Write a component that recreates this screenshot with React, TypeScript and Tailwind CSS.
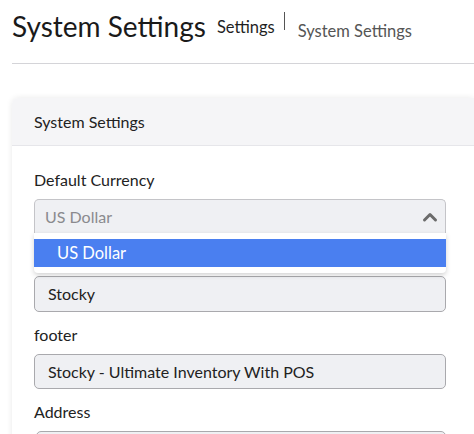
import * as React from "react";

function ChevronUp() {
  return (
    <svg viewBox="0 0 16 16" className="h-[16px] w-[16px]" fill="none">
      <path d="M2.5 11 L8 5.5 L13.5 11" stroke="#6b6b6b" strokeWidth="3" strokeLinecap="round" strokeLinejoin="round" />
    </svg>
  );
}

function Field({ value, h = "h-[36px]" }: { value: string; h?: string }) {
  return (
    <div className={`flex ${h} items-center rounded-[5px] border border-[#a9a9ad] bg-[#eff0f3] px-[13px] text-[16px] text-[#222]`}>
      {value}
    </div>
  );
}

export default function App() {
  return (
    <div
      className="h-[434px] w-[474px] overflow-hidden bg-white text-[#222]"
      style={{ fontFamily: "Lato, 'Open Sans', sans-serif" }}
    >
      <div className="flex items-baseline pl-3 pt-[8px]">
        <h1 className="text-[28px] leading-[36px] text-[#1a1a1a]">System Settings</h1>
        <span className="ml-[11px] -translate-y-[4px] text-[16.5px] text-[#1f1f1f]">Settings</span>
        <span className="ml-[9px] h-[18px] w-px -translate-y-[5px] self-center bg-[#555]" />
        <span className="ml-[13px] text-[16.5px] text-[#555]">System Settings</span>
      </div>
      <div className="ml-3 mt-[19px] border-b border-[#d4d4d8]" />

      <div className="ml-3 mt-[34px] rounded-l-[6px] bg-white shadow-[0_0_6px_rgba(0,0,0,0.09)]">
        <div className="flex h-[48px] items-center rounded-tl-[6px] border-b border-[#e6e6ea] bg-[#f5f5f7] pl-[22px] text-[16px] text-[#222]">
          System Settings
        </div>
        <div className="pl-[22px] pr-[28px] pt-[23px]">
          <div className="text-[16px] leading-[22px] text-[#222]">Default Currency</div>
          <div className="relative mt-[8px]">
            <div className="flex h-[34px] items-center justify-between rounded-t-[5px] border border-b-0 border-[#c4c4c8] bg-[#eff0f3] pl-[10px] pr-[7px] text-[16px] text-[#8a8a8e]">
              <span>US Dollar</span>
              <ChevronUp />
            </div>
            <div className="rounded-b-[4px] bg-white pb-[6px] pt-[6px] shadow-[0_2px_5px_rgba(0,0,0,0.18)]">
              <div className="flex h-[28px] items-center bg-[#4a7ff0] pl-[23px] text-[16.5px] text-white">US Dollar</div>
            </div>
          </div>
          <div className="mt-[3px]">
            <Field value="Stocky" />
          </div>
          <div className="mt-[12px] text-[16px] leading-[22px] text-[#222]">footer</div>
          <div className="mt-[8px]">
            <Field value="Stocky - Ultimate Inventory With POS" h="h-[35px]" />
          </div>
          <div className="mt-[12px] text-[16px] leading-[22px] text-[#222]">Address</div>
          <div className="ml-[2px] mt-[8px]">
            <Field value="" />
          </div>
        </div>
      </div>
    </div>
  );
}
